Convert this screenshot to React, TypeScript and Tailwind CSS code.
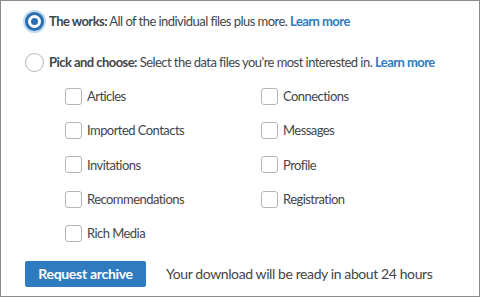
const left = ['Articles', 'Imported Contacts', 'Invitations', 'Recommendations', 'Rich Media']
const right = ['Connections', 'Messages', 'Profile', 'Registration']

function Box({ label }: { label: string }) {
  return (
    <label className="flex h-[34.3px] items-center gap-[5px]">
      <span className="h-[17px] w-[17px] shrink-0 rounded-[3px] border border-[#b3b6b9] bg-white" />
      <span>{label}</span>
    </label>
  )
}

export default function App() {
  return (
    <div
      className="h-[297px] w-[480px] overflow-hidden border border-[#8c8c8c] bg-white text-[13px] leading-[20px] tracking-[-0.55px] text-[#434649]"
      style={{ fontFamily: 'Lato, "Open Sans", sans-serif' }}
    >
      <div className="flex items-center gap-[5px] pl-[24px] pt-[10px]">
        <span className="flex h-[19px] w-[19px] items-center justify-center rounded-full border-[3px] border-[#2a6fb3] bg-white shadow-[0_0_0_2px_rgba(80,150,210,0.35)]">
          <span className="h-[7px] w-[7px] rounded-full bg-[#2a6fb3]" />
        </span>
        <p className="whitespace-nowrap">
          <b className="font-bold">The works:</b> All of the individual files plus more.{' '}
          <a className="font-bold text-[#2f7bbd]">Learn more</a>
        </p>
      </div>
      <div className="mt-[21px] flex items-center gap-[5px] pl-[24px]">
        <span className="h-[19px] w-[19px] rounded-full border border-[#b3b6b9] bg-white" />
        <p className="whitespace-nowrap">
          <b className="font-bold">Pick and choose:</b> Select the data files you're most interested in.{' '}
          <a className="font-bold text-[#2f7bbd]">Learn more</a>
        </p>
      </div>
      <div className="mt-[7px] grid grid-cols-[196px_1fr] pl-[64px]">
        <div className="flex flex-col">
          {left.map((l) => <Box key={l} label={l} />)}
        </div>
        <div className="flex flex-col">
          {right.map((l) => <Box key={l} label={l} />)}
        </div>
      </div>
      <div className="mt-[11px] flex items-center gap-[20px] pl-[24px]">
        <button className="h-[26px] w-[121px] rounded-[2px] bg-[#2e7bbf] text-[14px] font-bold tracking-[-0.3px] text-white">Request archive</button>
        <span className="text-[14px] tracking-[-0.4px]">Your download will be ready in about 24 hours</span>
      </div>
    </div>
  )
}
